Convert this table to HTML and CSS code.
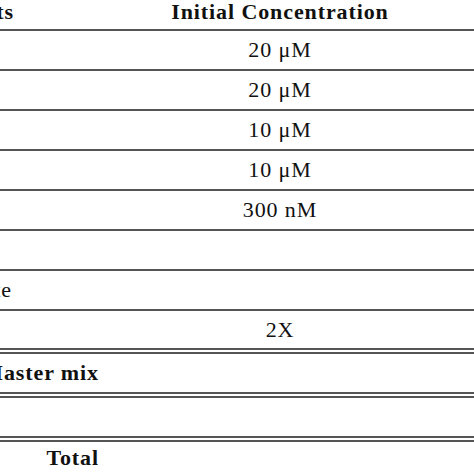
FILE: index.html
```html
<!DOCTYPE html>
<html lang="en">
<head>
<meta charset="utf-8">
<title>Reaction components</title>
<link rel="stylesheet" href="styles.css">
</head>
<body>
<div class="table">
  <div class="row head">
    <div class="name end-head"><span>Components</span></div>
    <div class="conc">Initial Concentration</div>
    <div></div>
  </div>
  <div class="row"><div class="name"></div><div class="conc">20 μM</div><div></div></div>
  <div class="row"><div class="name"></div><div class="conc">20 μM</div><div></div></div>
  <div class="row"><div class="name"></div><div class="conc">10 μM</div><div></div></div>
  <div class="row"><div class="name"></div><div class="conc">10 μM</div><div></div></div>
  <div class="row"><div class="name"></div><div class="conc">300 nM</div><div></div></div>
  <div class="row"><div class="name"></div><div class="conc"></div><div></div></div>
  <div class="row"><div class="name end-tmpl"><span>Template</span></div><div class="conc"></div><div></div></div>
  <div class="row dbl first"><div class="name"></div><div class="conc">2X</div><div></div></div>
  <div class="row dbl"><div class="name end-bold bold"><span>Master mix</span></div><div class="conc"></div><div></div></div>
  <div class="row dbl"><div class="name"></div><div class="conc"></div><div></div></div>
  <div class="row last"><div class="name end-bold bold"><span>Total</span></div><div class="conc"></div><div></div></div>
</div>
</body>
</html>
```
FILE: styles.css
```css
html, body {
  margin: 0;
  padding: 0;
  background: #fff;
}
body {
  font-family: "Liberation Serif", "Times New Roman", serif;
  font-size: 22px;
  letter-spacing: 0.9px;
  color: #111;
  overflow: hidden;
  width: 474px;
  height: 474px;
}
.table {
  display: flex;
  flex-direction: column;
}
.row {
  display: grid;
  grid-template-columns: 160px 240px 1fr;
  align-items: center;
  height: 40px;
  box-sizing: border-box;
  border-bottom: 2px solid #555;
}
.row.head {
  height: 31px;
  font-weight: bold;
  align-items: start;
  line-height: 24px;
}
.row.dbl {
  border-bottom: 6px double #555;
  height: 44px;
}
.row.dbl.first {
  height: 43px;
}
.row.last {
  border-bottom: none;
  height: 32px;
}
.name {
  display: flex;
  justify-content: flex-end;
  white-space: nowrap;
}
.bold { font-weight: bold; }
.end-head { padding-right: 146px; }
.end-tmpl { padding-right: 148px; }
.end-bold { padding-right: 61px; }
.conc {
  text-align: center;
  white-space: nowrap;
}
```
